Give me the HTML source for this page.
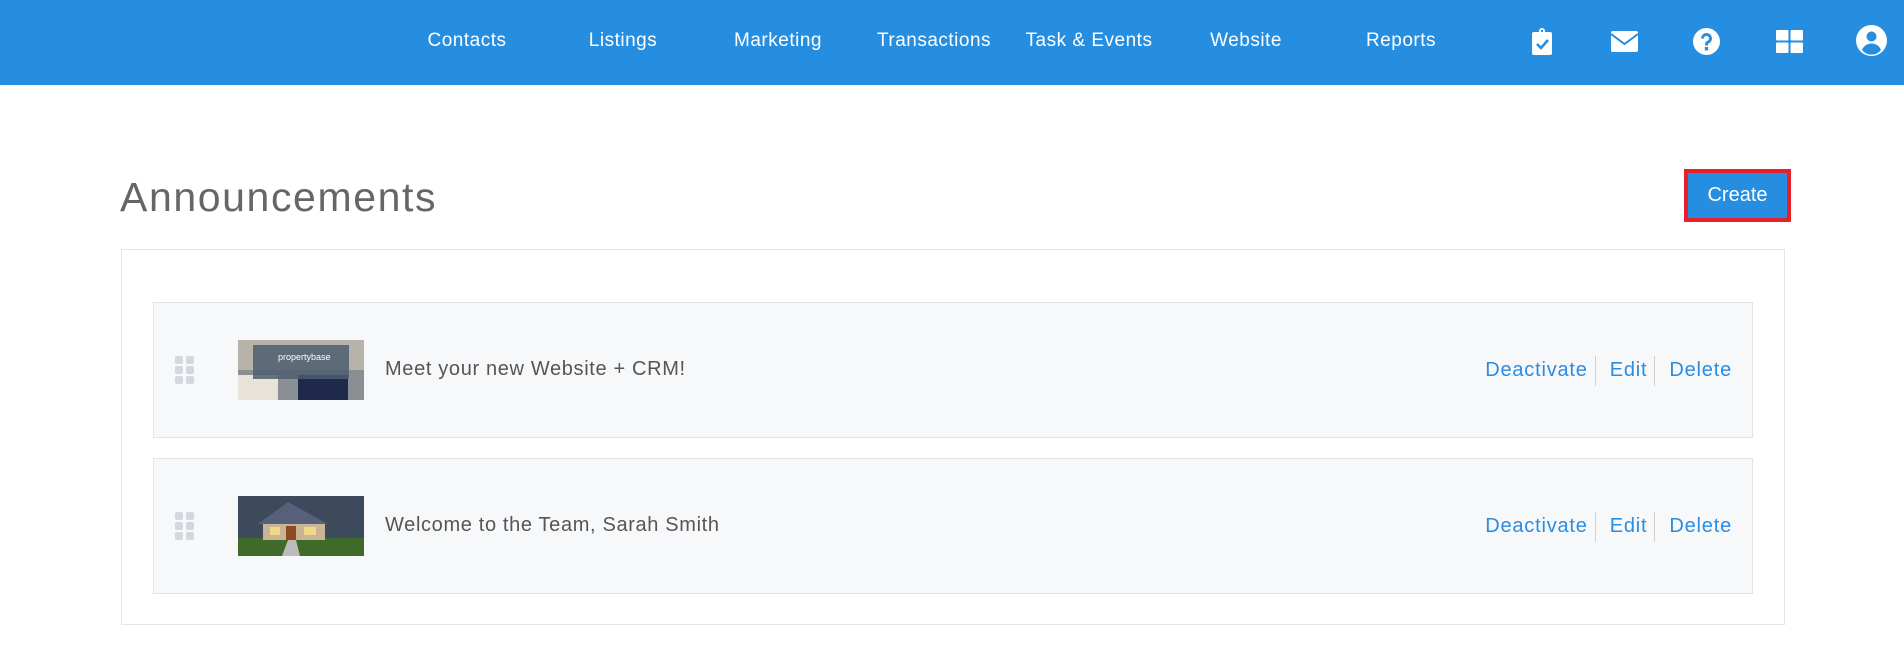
<!DOCTYPE html>
<html><head><meta charset="utf-8"><style>
*{box-sizing:border-box;margin:0;padding:0}
body{width:1904px;height:654px;background:#fff;font-family:"Liberation Sans",sans-serif;position:relative;overflow:hidden}
.nav{position:absolute;left:0;top:0;width:1904px;height:85px;background:#258ee1}
.nav span{position:absolute;top:30px;color:#fff;font-size:19px;letter-spacing:0.5px;transform:translateX(-50%);white-space:nowrap}
.nav svg{position:absolute}
h1{position:absolute;left:120px;top:174px;font-size:41px;font-weight:normal;color:#666;letter-spacing:1.6px}
.btn{position:absolute;left:1684px;top:169px;width:107px;height:53px;border:4px solid #e8202a;background:#258ee1;color:#fff;font-size:20px;text-align:center;line-height:45px}
.box{position:absolute;left:121px;top:249px;width:1664px;height:376px;border:1px solid #e5e5e5}
.card{position:absolute;left:153px;width:1600px;height:136px;background:#f7f8fa;border:1px solid #e4e4e4}
.drag{position:absolute;left:21px;top:53px;width:20px;height:28px}
.drag i{position:absolute;width:8px;height:8px;background:#d3d8de;border-radius:2px}
.img{position:absolute;left:84px;top:37px;width:126px;height:60px}
.title{position:absolute;left:231px;top:55px;font-size:20px;color:#555;letter-spacing:0.65px}
.act{position:absolute;right:20px;top:53px;font-size:20px;color:#2b8ce0;letter-spacing:0.8px}
.act span{padding:0 7px 0 14px}
.act span:first-child{padding-left:0}
.act b{display:inline-block;width:1px;height:30px;background:#d0d0d0;vertical-align:middle;font-weight:normal}
</style></head><body>
<div class="nav">
<span style="left:467px">Contacts</span>
<span style="left:623px">Listings</span>
<span style="left:778px">Marketing</span>
<span style="left:934px">Transactions</span>
<span style="left:1089px">Task &amp; Events</span>
<span style="left:1246px">Website</span>
<span style="left:1401px">Reports</span>
<svg style="left:1532px;top:28px" width="20" height="27" viewBox="0 0 20 27"><rect x="0" y="4" width="20" height="23" rx="2" fill="#fff"/><circle cx="10" cy="3" r="3" fill="#fff"/><circle cx="10" cy="3" r="1.2" fill="#258ee1"/><path d="M5 16l4 4 7-8" stroke="#258ee1" stroke-width="2.6" fill="none"/></svg>
<svg style="left:1611px;top:31px" width="27" height="21" viewBox="0 0 27 21"><rect width="27" height="21" rx="2" fill="#fff"/><path d="M0 3l13.5 10L27 3" stroke="#258ee1" stroke-width="2" fill="none"/></svg>
<svg style="left:1693px;top:28px" width="27" height="27" viewBox="0 0 27 27"><circle cx="13.5" cy="13.5" r="13.5" fill="#fff"/><path d="M9.5 10.5a4 4 0 1 1 5.5 3.7c-1 .5-1.5 1.2-1.5 2.3v1" stroke="#258ee1" stroke-width="3" fill="none"/><rect x="11.8" y="19" width="3.4" height="3.4" fill="#258ee1"/></svg>
<svg style="left:1776px;top:30px" width="27" height="23" viewBox="0 0 27 23"><rect width="12.5" height="10.5" rx="1" fill="#fff"/><rect x="14.5" width="12.5" height="10.5" rx="1" fill="#fff"/><rect y="12.5" width="12.5" height="10.5" rx="1" fill="#fff"/><rect x="14.5" y="12.5" width="12.5" height="10.5" rx="1" fill="#fff"/></svg>
<svg style="left:1856px;top:25px" width="31" height="31" viewBox="0 0 31 31"><circle cx="15.5" cy="15.5" r="15.5" fill="#fff"/><circle cx="15.5" cy="11.5" r="5" fill="#258ee1"/><path d="M6 25c2-5 6-6.5 9.5-6.5S23 20 25 25a12 12 0 0 1-19 0z" fill="#258ee1"/></svg>
</div>
<h1>Announcements</h1>
<div class="btn">Create</div>
<div class="box"></div>
<div class="card" style="top:302px">
<div class="drag"><i style="left:0;top:0"></i><i style="left:11px;top:0"></i><i style="left:0;top:10px"></i><i style="left:11px;top:10px"></i><i style="left:0;top:20px"></i><i style="left:11px;top:20px"></i></div>
<svg class="img" viewBox="0 0 126 60"><rect width="126" height="60" fill="#8a8f93"/><rect x="0" y="0" width="126" height="30" fill="#b7b2aa"/><rect x="0" y="35" width="40" height="25" fill="#e8e2d8"/><rect x="60" y="35" width="50" height="25" fill="#1f2a4a"/><rect x="15" y="5" width="96" height="34" fill="#4e5e70" opacity=".85"/><text x="40" y="20" font-size="9" fill="#fff" font-family="Liberation Sans">propertybase</text></svg>
<div class="title">Meet your new Website + CRM!</div>
<div class="act"><span>Deactivate</span><b></b><span>Edit</span><b></b><span style="padding-right:0">Delete</span></div>
</div>
<div class="card" style="top:458px">
<div class="drag"><i style="left:0;top:0"></i><i style="left:11px;top:0"></i><i style="left:0;top:10px"></i><i style="left:11px;top:10px"></i><i style="left:0;top:20px"></i><i style="left:11px;top:20px"></i></div>
<svg class="img" viewBox="0 0 126 60"><rect width="126" height="60" fill="#3c4a5c"/><rect y="42" width="126" height="18" fill="#3f6a2a"/><path d="M20 28l30-22 40 22z" fill="#56607a"/><rect x="25" y="28" width="62" height="16" fill="#c9b596"/><rect x="48" y="30" width="10" height="14" fill="#8a4a22"/><rect x="32" y="31" width="10" height="8" fill="#f2d88a"/><rect x="66" y="31" width="12" height="8" fill="#f2d88a"/><path d="M50 44l-6 16h18l-4-16z" fill="#bbb"/></svg>
<div class="title">Welcome to the Team, Sarah Smith</div>
<div class="act"><span>Deactivate</span><b></b><span>Edit</span><b></b><span style="padding-right:0">Delete</span></div>
</div>
</body></html>
